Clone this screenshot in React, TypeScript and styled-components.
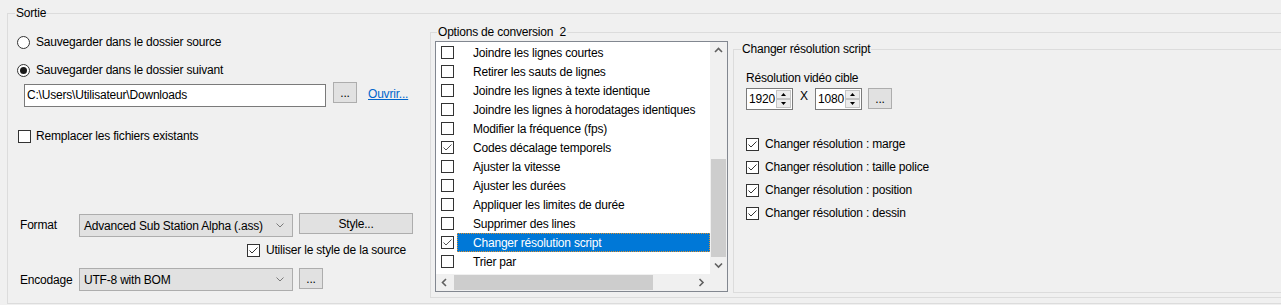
import React from 'react';
import styled, { createGlobalStyle } from 'styled-components';

const GlobalStyle = createGlobalStyle`
  html, body {
    margin: 0;
    padding: 0;
    background: #f0f0f0;
  }
  body {
    font-family: 'Liberation Sans', Arial, sans-serif;
    font-size: 12px;
    letter-spacing: -0.2px;
    color: #000;
  }
`;

const Window = styled.div`
  box-sizing: border-box;
  width: 1281px;
  height: 305px;
  overflow: hidden;
  background: #f0f0f0;
  padding: 13px 0 0 7px;
`;

const GroupBox = styled.div<{ $height: number; $top?: number; $left?: number }>`
  box-sizing: border-box;
  display: flex;
  flex-direction: column;
  flex: 1;
  min-width: 0;
  height: ${(p) => p.$height}px;
  margin-top: ${(p) => p.$top ?? 0}px;
  margin-left: ${(p) => p.$left ?? 0}px;
  border: 1px solid #dcdcdc;
  border-right: none;
`;

const Caption = styled.div<{ $indent: number }>`
  align-self: flex-start;
  margin: -9px 0 0 ${(p) => p.$indent}px;
  padding: 0 1px;
  height: 16px;
  line-height: 16px;
  background: #f0f0f0;
  white-space: pre;
`;

const Body = styled.div`
  display: flex;
  align-items: flex-start;
  flex: 1;
`;

const LeftColumn = styled.div`
  display: flex;
  flex-direction: column;
  flex-shrink: 0;
  width: 422px;
`;

const Row = styled.div<{ $top: number; $left: number; $height?: number; $align?: string }>`
  display: flex;
  align-items: ${(p) => p.$align ?? 'center'};
  margin-top: ${(p) => p.$top}px;
  padding-left: ${(p) => p.$left}px;
  height: ${(p) => p.$height ?? 16}px;
  line-height: 16px;
  white-space: nowrap;
`;

const Label = styled.span<{ $gap?: number }>`
  margin-left: ${(p) => p.$gap ?? 0}px;
  line-height: 16px;
`;

const FieldLabel = styled.span`
  width: 59px;
  margin-top: 4px;
  line-height: 16px;
`;

const Radio = styled.span<{ $checked?: boolean }>`
  box-sizing: border-box;
  position: relative;
  width: 13px;
  height: 13px;
  border: 1px solid #333;
  border-radius: 50%;
  background: #fff;
  flex-shrink: 0;
  &::after {
    content: '';
    display: ${(p) => (p.$checked ? 'block' : 'none')};
    position: absolute;
    left: 2px;
    top: 2px;
    width: 7px;
    height: 7px;
    border-radius: 50%;
    background: #1a1a1a;
  }
`;

const BoxSvg = styled.svg`
  flex-shrink: 0;
  display: block;
`;

const CheckBox = ({ checked, muted }: { checked?: boolean; muted?: boolean }) => (
  <BoxSvg width="13" height="13" viewBox="0 0 13 13">
    <rect x="0.5" y="0.5" width="12" height="12" fill="#fff" stroke="#333" />
    {checked && (
      <polyline
        points="2.5,6.5 5,9 10.5,3.5"
        fill="none"
        stroke={muted ? '#555' : '#333'}
        strokeWidth="1"
      />
    )}
  </BoxSvg>
);

const TextBox = styled.div`
  box-sizing: border-box;
  width: 302px;
  height: 23px;
  margin-top: 2px;
  padding-left: 2px;
  border: 1px solid #7a7a7a;
  background: #fff;
  line-height: 21px;
`;

const Button = styled.div<{ $width: number; $gap?: number; $height?: number }>`
  box-sizing: border-box;
  width: ${(p) => p.$width}px;
  height: ${(p) => p.$height ?? 21}px;
  margin-left: ${(p) => p.$gap ?? 0}px;
  border: 1px solid #adadad;
  background: #e1e1e1;
  display: flex;
  align-items: center;
  justify-content: center;
  line-height: 16px;
  flex-shrink: 0;
`;

const Link = styled.span`
  margin: 4px 0 0 11px;
  color: #0066cc;
  text-decoration: underline;
  line-height: 16px;
`;

const Combo = styled.div<{ $top?: number }>`
  box-sizing: border-box;
  width: 214px;
  height: 23px;
  margin-top: ${(p) => p.$top ?? 1}px;
  padding: 0 8px 0 4px;
  border: 1px solid #adadad;
  background: #e1e1e1;
  display: flex;
  align-items: center;
  justify-content: space-between;
  flex-shrink: 0;
`;

const Chevron = ({ dir }: { dir: 'up' | 'down' | 'left' | 'right' }) => {
  const pts = {
    up: '1,5 4.5,1.5 8,5',
    down: '1,1.5 4.5,5 8,1.5',
    left: '5,1 1.5,4.5 5,8',
    right: '1.5,1 5,4.5 1.5,8',
  }[dir];
  const horiz = dir === 'up' || dir === 'down';
  return (
    <svg width={horiz ? 9 : 7} height={horiz ? 7 : 9} viewBox={horiz ? '0 0 9 7' : '0 0 7 9'}>
      <polyline points={pts} fill="none" stroke="#606060" strokeWidth="1.6" />
    </svg>
  );
};

const ComboArrow = () => (
  <svg width="8" height="5" viewBox="0 0 8 5">
    <polyline points="0.5,0.5 4,4 7.5,0.5" fill="none" stroke="#7a7a7a" strokeWidth="1" />
  </svg>
);

/* list box */

const ListBox = styled.div`
  box-sizing: border-box;
  width: 293px;
  height: 251px;
  margin: 1px 0 0 4px;
  border: 1px solid #828790;
  background: #fff;
  display: flex;
  flex-direction: column;
  flex-shrink: 0;
`;

const ListMain = styled.div`
  display: flex;
  height: 232px;
`;

const Items = styled.div`
  flex: 1;
  padding-top: 1px;
  overflow: hidden;
`;

const Item = styled.div`
  display: flex;
  align-items: center;
  height: 19px;
  white-space: nowrap;
`;

const CheckCell = styled.div`
  box-sizing: border-box;
  width: 21px;
  padding-left: 5px;
  display: flex;
  align-items: center;
`;

const ItemLabel = styled.div<{ $selected?: boolean }>`
  box-sizing: border-box;
  flex: 1;
  height: 19px;
  line-height: 18px;
  padding-left: 15px;
  border: 1px ${(p) => (p.$selected ? 'dotted #e0902c' : 'solid transparent')};
  background: ${(p) => (p.$selected ? '#0078d7' : 'transparent')};
  color: ${(p) => (p.$selected ? '#fff' : '#000')};
`;

const VScroll = styled.div`
  width: 17px;
  background: #f0f0f0;
  display: flex;
  flex-direction: column;
`;

const ArrowCell = styled.div`
  width: 17px;
  height: 17px;
  display: flex;
  align-items: center;
  justify-content: center;
  flex-shrink: 0;
`;

const VTrack = styled.div`
  flex: 1;
  display: flex;
  flex-direction: column;
  justify-content: flex-end;
  align-items: center;
`;

const VThumb = styled.div`
  width: 15px;
  height: 98px;
  background: #cdcdcd;
`;

const HScroll = styled.div`
  height: 17px;
  display: flex;
  background: #f0f0f0;
`;

const HTrack = styled.div`
  flex: 1;
  display: flex;
  align-items: center;
`;

const HThumb = styled.div`
  width: 199px;
  height: 15px;
  margin-left: 1px;
  background: #cdcdcd;
`;

const Corner = styled.div`
  width: 17px;
  background: #f0f0f0;
`;

/* resolution panel */

const Spin = styled.div`
  box-sizing: border-box;
  display: flex;
  width: 47px;
  height: 22px;
  border: 1px solid #7a7a7a;
  background: #fff;
  flex-shrink: 0;
`;

const SpinValue = styled.div`
  flex: 1;
  padding-left: 2px;
  line-height: 20px;
`;

const SpinButtons = styled.div`
  display: flex;
  flex-direction: column;
  width: 15px;
  padding: 1px 1px 1px 0;
`;

const SpinButton = styled.div`
  flex: 1;
  box-sizing: border-box;
  border: 1px solid #c4c4c4;
  background: #ececec;
  display: flex;
  align-items: center;
  justify-content: center;
`;

const Tri = ({ up }: { up?: boolean }) => (
  <svg width="5" height="3" viewBox="0 0 5 3">
    <polygon points={up ? '0,3 2.5,0 5,3' : '0,0 2.5,3 5,0'} fill="#000" />
  </svg>
);

const SpinBox = ({ value }: { value: string }) => (
  <Spin>
    <SpinValue>{value}</SpinValue>
    <SpinButtons>
      <SpinButton>
        <Tri up />
      </SpinButton>
      <SpinButton>
        <Tri />
      </SpinButton>
    </SpinButtons>
  </Spin>
);

const Times = styled.span`
  width: 22px;
  text-align: center;
  line-height: 16px;
`;

const ResColumn = styled.div`
  display: flex;
  flex-direction: column;
`;

const options = [
  { label: 'Joindre les lignes courtes' },
  { label: 'Retirer les sauts de lignes' },
  { label: 'Joindre les lignes à texte identique' },
  { label: 'Joindre les lignes à horodatages identiques' },
  { label: 'Modifier la fréquence (fps)' },
  { label: 'Codes décalage temporels', checked: true },
  { label: 'Ajuster la vitesse' },
  { label: 'Ajuster les durées' },
  { label: 'Appliquer les limites de durée' },
  { label: 'Supprimer des lines' },
  { label: 'Changer résolution script', checked: true, selected: true },
  { label: 'Trier par' },
];

const resChecks = [
  'Changer résolution : marge',
  'Changer résolution : taille police',
  'Changer résolution : position',
  'Changer résolution : dessin',
];

const App = () => {
  return (
    <>
      <GlobalStyle />
      <Window>
        <GroupBox $height={291}>
          <Caption $indent={7}>Sortie</Caption>
          <Body>
            <LeftColumn>
              <Row $top={13} $left={9}>
                <Radio />
                <Label $gap={6}>Sauvegarder dans le dossier source</Label>
              </Row>
              <Row $top={12} $left={9}>
                <Radio $checked />
                <Label $gap={6}>Sauvegarder dans le dossier suivant</Label>
              </Row>
              <Row $top={4} $left={16} $height={25} $align="flex-start">
                <TextBox>C:\Users\Utilisateur\Downloads</TextBox>
                <Button $width={24} $gap={7}>...</Button>
                <Link>Ouvrir...</Link>
              </Row>
              <Row $top={21} $left={10}>
                <CheckBox />
                <Label $gap={5}>Remplacer les fichiers existants</Label>
              </Row>
              <Row $top={69} $left={12} $height={24} $align="flex-start">
                <FieldLabel>Format</FieldLabel>
                <Combo>
                  <span>Advanced Sub Station Alpha (.ass)</span>
                  <ComboArrow />
                </Combo>
                <Button $width={114} $gap={6}>Style...</Button>
              </Row>
              <Row $top={5} $left={239}>
                <CheckBox checked />
                <Label $gap={6}>Utiliser le style de la source</Label>
              </Row>
              <Row $top={10} $left={12} $height={23} $align="flex-start">
                <FieldLabel>Encodage</FieldLabel>
                <Combo $top={0}>
                  <span>UTF-8 with BOM</span>
                  <ComboArrow />
                </Combo>
                <Button $width={24} $gap={6}>...</Button>
              </Row>
            </LeftColumn>

            <GroupBox $height={266} $top={11}>
              <Caption $indent={6}>Options de conversion  2</Caption>
              <Body>
                <ListBox>
                  <ListMain>
                    <Items>
                      {options.map((o) => (
                        <Item key={o.label}>
                          <CheckCell>
                            <CheckBox checked={o.checked} muted />
                          </CheckCell>
                          <ItemLabel $selected={o.selected}>{o.label}</ItemLabel>
                        </Item>
                      ))}
                    </Items>
                    <VScroll>
                      <ArrowCell>
                        <Chevron dir="up" />
                      </ArrowCell>
                      <VTrack>
                        <VThumb />
                      </VTrack>
                      <ArrowCell>
                        <Chevron dir="down" />
                      </ArrowCell>
                    </VScroll>
                  </ListMain>
                  <HScroll>
                    <ArrowCell>
                      <Chevron dir="left" />
                    </ArrowCell>
                    <HTrack>
                      <HThumb />
                    </HTrack>
                    <ArrowCell>
                      <Chevron dir="right" />
                    </ArrowCell>
                    <Corner />
                  </HScroll>
                </ListBox>

                <GroupBox $height={244} $top={9} $left={5}>
                  <Caption $indent={7}>Changer résolution script</Caption>
                  <ResColumn>
                    <Row $top={13} $left={12}>
                      <Label>Résolution vidéo cible</Label>
                    </Row>
                    <Row $top={2} $left={12} $height={22} $align="flex-start">
                      <SpinBox value="1920" />
                      <Times>X</Times>
                      <SpinBox value="1080" />
                      <Button $width={24} $gap={6}>...</Button>
                    </Row>
                    {resChecks.map((c, i) => (
                      <Row key={c} $top={i === 0 ? 26 : 7} $left={12}>
                        <CheckBox checked />
                        <Label $gap={6}>{c}</Label>
                      </Row>
                    ))}
                  </ResColumn>
                </GroupBox>
              </Body>
            </GroupBox>
          </Body>
        </GroupBox>
      </Window>
    </>
  );
};

export default App;
